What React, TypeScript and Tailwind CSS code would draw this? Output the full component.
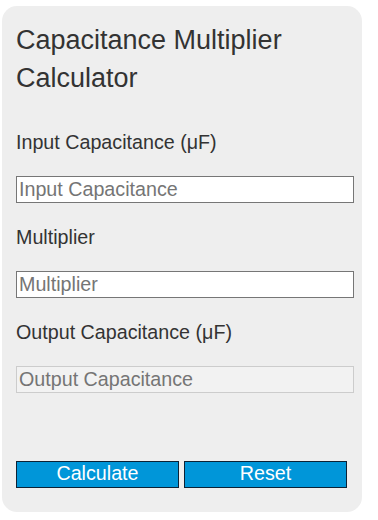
export default function App() {
  return (
    <div className="min-h-screen bg-white pl-[2px] pt-[6px]" style={{ fontFamily: '"Liberation Sans", Arial, sans-serif' }}>
      <div className="w-[360px] h-[506px] rounded-[15px] bg-[#eeeeee] pl-[14px] pt-[15px] text-[#333333]">
        <h1 className="text-[27px] leading-[38px] font-normal">
          Capacitance Multiplier
          <br />
          Calculator
        </h1>

        <div className="mt-[32px] flex flex-col">
          <label className="text-[19.7px] leading-[27px]">Input Capacitance (μF)</label>
          <input
            className="mt-[20px] h-[27px] w-[338px] border border-[#767676] bg-white px-[2px] text-[19.7px] placeholder:text-[#757575] outline-none"
            placeholder="Input Capacitance"
          />

          <label className="mt-[21px] text-[19.7px] leading-[27px]">Multiplier</label>
          <input
            className="mt-[20px] h-[27px] w-[338px] border border-[#767676] bg-white px-[2px] text-[19.7px] placeholder:text-[#757575] outline-none"
            placeholder="Multiplier"
          />

          <label className="mt-[21px] text-[19.7px] leading-[27px]">Output Capacitance (μF)</label>
          <input
            className="mt-[20px] h-[27px] w-[338px] border border-[#cccccc] bg-[#f2f2f2] px-[2px] text-[19.7px] placeholder:text-[#757575] outline-none"
            placeholder="Output Capacitance"
            readOnly
          />

          <div className="mt-[68px] flex gap-[5px]">
            <button className="flex h-[27px] w-[163px] items-center justify-center border border-[#0b2236] bg-[#0096d9] pb-[2px] text-[19.7px] leading-none text-white">
              Calculate
            </button>
            <button className="flex h-[27px] w-[163px] items-center justify-center border border-[#0b2236] bg-[#0096d9] pb-[2px] text-[19.7px] leading-none text-white">
              Reset
            </button>
          </div>
        </div>
      </div>
    </div>
  );
}
